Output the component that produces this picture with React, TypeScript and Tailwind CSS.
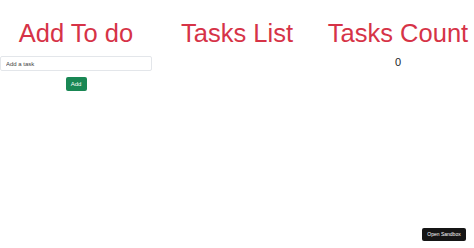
import { useState } from "react";

export default function App() {
  const [task, setTask] = useState("");
  const [tasks, setTasks] = useState<string[]>([]);

  const addTask = () => {
    if (!task.trim()) return;
    setTasks([...tasks, task.trim()]);
    setTask("");
  };

  return (
    <div className="relative min-h-[248px] w-[474px] bg-white font-['Liberation_Sans',Arial,sans-serif] text-[#212529]">
      <div className="grid grid-cols-3 gap-x-[9px] pt-[18px]">
        {/* Add To do */}
        <div className="flex flex-col items-center">
          <h1 className="text-[25.5px] leading-[30px] text-[#d63347]">Add To do</h1>
          <input
            value={task}
            onChange={(e) => setTask(e.target.value)}
            placeholder="Add a task"
            className="mt-[8px] h-[15px] w-full rounded-[2px] border border-[#e3e6ea] px-[5px] text-[6px] placeholder:text-[#444] outline-none"
          />
          <button
            type="button"
            onClick={addTask}
            className="mt-[6px] h-[14px] w-[21px] rounded-[2px] bg-[#198754] text-[6px] text-white"
          >
            Add
          </button>
        </div>

        {/* Tasks List */}
        <div className="flex flex-col items-center">
          <h1 className="text-[25.5px] leading-[30px] text-[#d63347]">Tasks List</h1>
          <ul className="mt-[8px] text-[8px]">
            {tasks.map((t, i) => (
              <li key={i}>{t}</li>
            ))}
          </ul>
        </div>

        {/* Tasks Count */}
        <div className="flex flex-col items-center">
          <h1 className="text-[25.5px] leading-[30px] text-[#d63347]">Tasks Count</h1>
          <p className="mt-[6px] text-[11px] leading-[16px]">{tasks.length}</p>
        </div>
      </div>

      <button
        type="button"
        className="absolute right-[8px] bottom-[7px] h-[13px] w-[44px] rounded-[2px] bg-[#151515] text-[5px] text-white"
      >
        Open Sandbox
      </button>
    </div>
  );
}
